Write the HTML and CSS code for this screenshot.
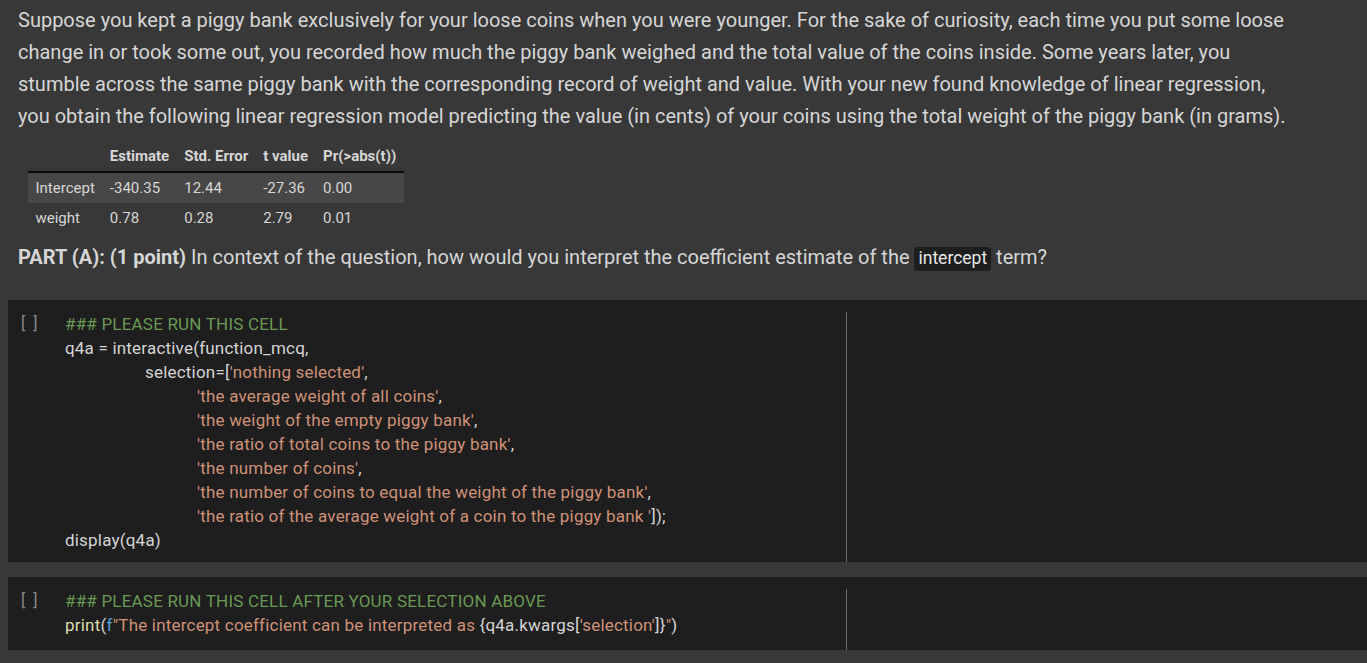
FILE: index.html
```html
<!DOCTYPE html>
<html>
<head>
<meta charset="utf-8">
<link rel="stylesheet" href="styles.css">
</head>
<body>
<div class="page">
  <div class="text-cell">
    <p class="para">Suppose you kept a piggy bank exclusively for your loose coins when you were younger. For the sake of curiosity, each time you put some loose<br>change in or took some out, you recorded how much the piggy bank weighed and the total value of the coins inside. Some years later, you<br>stumble across the same piggy bank with the corresponding record of weight and value. With your new found knowledge of linear regression,<br>you obtain the following linear regression model predicting the value (in cents) of your coins using the total weight of the piggy bank (in grams).</p>
    <table class="reg">
      <thead>
        <tr><th></th><th>Estimate</th><th>Std. Error</th><th>t value</th><th>Pr(&gt;abs(t))</th></tr>
      </thead>
      <tbody>
        <tr class="odd"><td>Intercept</td><td>-340.35</td><td>12.44</td><td>-27.36</td><td>0.00</td></tr>
        <tr><td>weight</td><td>0.78</td><td>0.28</td><td>2.79</td><td>0.01</td></tr>
      </tbody>
    </table>
    <p class="part"><b>PART (A): (1 point)</b> In context of the question, how would you interpret the coefficient estimate of the <code class="inline">intercept</code> term?</p>
  </div>

  <div class="code-cell cell1">
    <div class="gutter">[ ]</div>
    <div class="editor">
      <div class="line"><span class="cm">### PLEASE RUN THIS CELL</span></div>
      <div class="line">q4a = interactive(function_mcq,</div>
      <div class="line ind1">selection=[<span class="st">'nothing selected'</span>,</div>
      <div class="line ind2"><span class="st">'the average weight of all coins'</span>,</div>
      <div class="line ind2"><span class="st">'the weight of the empty piggy bank'</span>,</div>
      <div class="line ind2"><span class="st">'the ratio of total coins to the piggy bank'</span>,</div>
      <div class="line ind2"><span class="st">'the number of coins'</span>,</div>
      <div class="line ind2"><span class="st">'the number of coins to equal the weight of the piggy bank'</span>,</div>
      <div class="line ind2"><span class="st">'the ratio of the average weight of a coin to the piggy bank '</span>]);</div>
      <div class="line">display(q4a)</div>
    </div>
  </div>

  <div class="code-cell cell2">
    <div class="gutter">[ ]</div>
    <div class="editor">
      <div class="line"><span class="cm">### PLEASE RUN THIS CELL AFTER YOUR SELECTION ABOVE</span></div>
      <div class="line"><span class="fn">print</span>(<span class="kw">f</span><span class="st">"The intercept coefficient can be interpreted as </span>{q4a.kwargs[<span class="st">'selection'</span>]}<span class="st">"</span>)</div>
    </div>
  </div>
</div>
</body>
</html>
```

FILE: styles.css
```css
html, body {
  margin: 0;
  padding: 0;
  background: #383838;
  width: 1367px;
  height: 663px;
  overflow: hidden;
}
.page {
  display: flex;
  flex-direction: column;
}
.text-cell {
  padding: 4px 0 0 18px;
  font-family: Roboto, "Liberation Sans", sans-serif;
  color: #d6d6d6;
}
.para {
  margin: 0;
  font-size: 20px;
  line-height: 32px;
  white-space: nowrap;
}
.reg {
  margin: 10px 0 0 10px;
  border-collapse: collapse;
  font-size: 15px;
  color: #d6d6d6;
}
.reg th {
  font-weight: 700;
  text-align: left;
  padding: 0 7.5px 2px 7.5px;
  height: 27px;
  border-bottom: 2px solid #0c0c0c;
  vertical-align: middle;
  line-height: 16px;
}
.reg td {
  text-align: left;
  padding: 0 7.5px;
  height: 30px;
  line-height: 16px;
}
.reg tr.odd td {
  background: #474747;
}
.part {
  margin: 11px 0 0 0;
  font-size: 20px;
  line-height: 26px;
}
.part b {
  font-weight: 700;
}
.inline {
  font-family: Roboto, "Liberation Sans", sans-serif;
  font-size: 17.5px;
  background: #1e1e1e;
  padding: 1px 4px 3px;
  border-radius: 3px;
  color: #e8e8e8;
}
.code-cell {
  margin-left: 8px;
  background: #1e1e1e;
  display: flex;
  font-family: Roboto, "DejaVu Sans", sans-serif;
  font-size: 17px;
  color: #d4d4d4;
}
.cell1 {
  margin-top: 29px;
  height: 262px;
}
.cell2 {
  margin-top: 15px;
  height: 73px;
}
.gutter {
  width: 57px;
  padding: 12px 0 0 13px;
  box-sizing: border-box;
  color: #8a8a8a;
  font-size: 16px;
  line-height: 24px;
  letter-spacing: 2px;
}
.editor {
  width: 781px;
  border-right: 1px solid #6a6a6a;
  margin-top: 12px;
}
.line {
  height: 24px;
  line-height: 24px;
  white-space: pre;
  letter-spacing: 0.2px;
}
.ind1 { padding-left: 80px; }
.ind2 { padding-left: 132px; }
.cm { color: #6a9955; }
.st { color: #ce9178; }
.fn { color: #dcdcaa; }
.kw { color: #569cd6; }
```
